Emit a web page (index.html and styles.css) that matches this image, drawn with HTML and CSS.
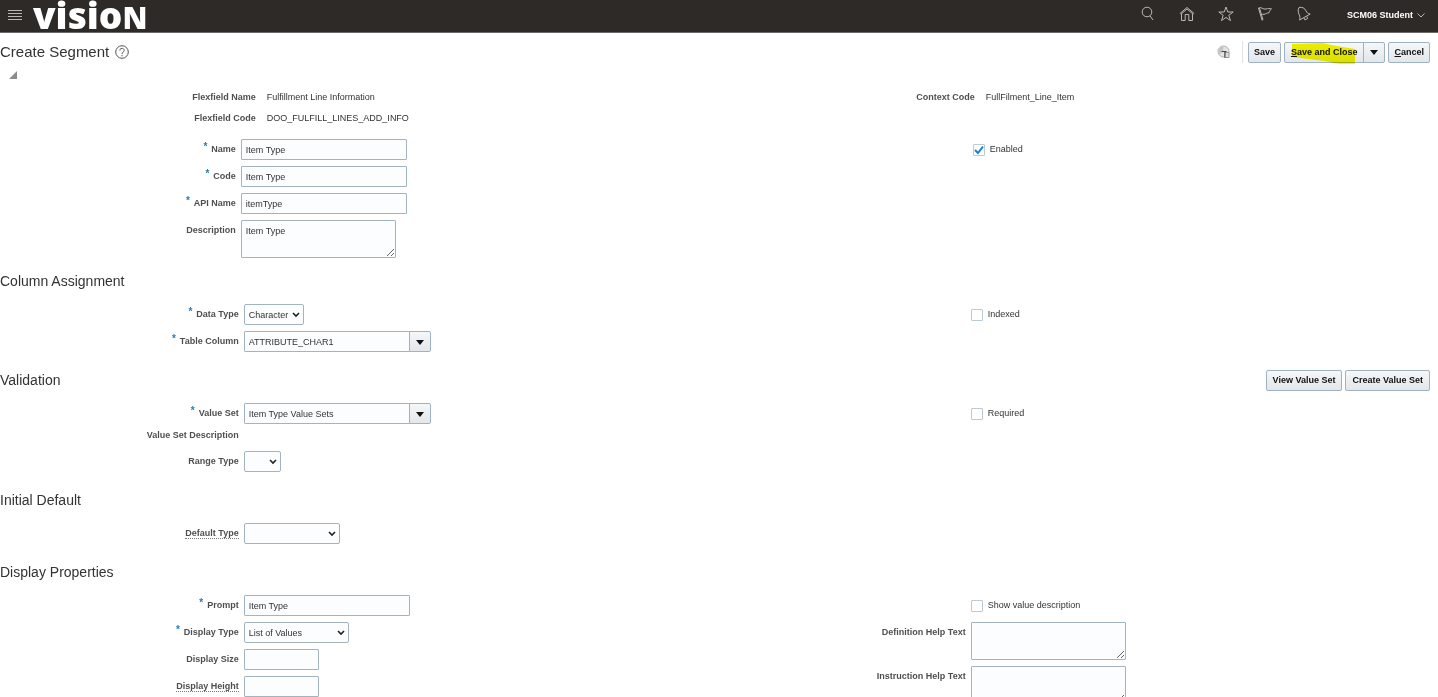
FILE: index.html
```html
<!DOCTYPE html>
<html lang="en">
<head>
<meta charset="utf-8">
<title>Create Segment</title>
<link rel="stylesheet" href="styles.css">
</head>
<body>
<header class="topbar">
  <button class="icon-button menu" aria-label="Menu"><svg width="14" height="11" viewBox="0 0 14 11"><path d="M0 .5h14M0 3.500h14M0 6.500h14M0 9.500h14"/></svg></button>
  <a class="logo" href="#">visio<span class="logo-cap">N</span></a>
  <nav class="tools" aria-label="Global">
    <button class="icon-button" aria-label="Search"><svg width="16" height="16" viewBox="0 0 16 16"><circle cx="7" cy="6" r="4.800"/><path d="M10 9.800l3 4.200"/></svg></button>
    <button class="icon-button" aria-label="Home"><svg width="16" height="16" viewBox="0 0 16 16"><path d="M.8 7.600L8 1.500l7.200 6.100M1.800 8.300L8 3l6.200 5.300M2.500 8v6.500h3.700V8.500h3.600v6h3.700V8"/></svg></button>
    <button class="icon-button" aria-label="Favorites"><svg width="16" height="16" viewBox="0 0 16 16"><path d="M8 1l1.800 5h5.400l-4.400 3.300 1.700 5.300L8 11.400l-4.500 3.200 1.700-5.300L.8 6h5.400z"/></svg></button>
    <button class="icon-button" aria-label="Watchlist"><svg width="16" height="16" viewBox="0 0 16 16"><path d="M1.500 2l3.700 12.500M2.500 2l3.500 12M1.500 2c3-1.500 4.500 1.800 7.500 1 2-.6 3.500-.6 5.500-.1-1.500 1-2 2.200-2.800 4.200-2-.5-2.700 1-4.700 1.200-1.500.1-2.200-.3-3.200.4"/></svg></button>
    <button class="icon-button" aria-label="Notifications"><svg width="16" height="16" viewBox="0 0 16 16"><path d="M3 1.500c3-.8 5.800.6 7 3.300.7 1.800 1.500 2.500 4.200 3.300L3.500 14c.7-2.300.5-3.500-.3-5.300-1.200-2.600-1.400-5-.2-7.200zM8 12l.9 1.900 2.700-1.400-.8-2.100"/></svg></button>
  </nav>
  <button class="user">SCM06 Student<svg width="8" height="5" viewBox="0 0 8 5"><path d="M.5.500L4 4l3.500-3.500"/></svg></button>
</header>

<main class="page">
  <div class="title-row">
    <h1>Create Segment</h1>
    <button class="help" aria-label="Help"><svg width="14" height="14" viewBox="0 0 14 14"><circle cx="7" cy="7" r="6.300"/><path d="M4.800 5.500c0-3 4.500-2.800 4.400 0C9.200 7 7 7 7 9M7 10v1.300"/></svg></button>
    <div class="actions">
      <svg class="status" width="14" height="14" viewBox="0 0 14 14"><circle cx="6.500" cy="6.500" r="5.500" fill="#e4e4e4" stroke="#b0b0b0"/><path d="M6.500 1.500A5 5 0 0 0 2.500 9.500L6 6z" fill="#c6c6c6"/><path d="M7.500 7.500h4.500v5H7.500z" fill="#ddd" stroke="#999"/><path d="M4.500 6.500h5M8 6.500v6" fill="none" stroke="#444"/></svg>
      <span class="divider"></span>
      <button class="button">Save</button>
      <div class="split">
        <button class="button marked"><u>S</u>ave and Close<svg class="marker" width="66" height="22" viewBox="0 0 66 22"><path d="M1 1L31 0l15 3 18 3v15H48l-14-3-33-4z"/></svg></button>
        <button class="button drop" aria-label="More save options"><span class="caret"></span></button>
      </div>
      <button class="button"><u>C</u>ancel</button>
    </div>
  </div>
  <button class="disclosure" aria-label="Collapse"><svg width="8" height="8" viewBox="0 0 8 8"><path d="M8 0v8H0z"/></svg></button>

  <form class="form basic">
    <div class="column">
      <dl class="facts">
        <dt>Flexfield Name</dt><dd>Fulfillment Line Information</dd>
        <dt>Flexfield Code</dt><dd>DOO_FULFILL_LINES_ADD_INFO</dd>
      </dl>
      <div class="row"><label for="name"><i>*</i>Name</label><input class="field wide" id="name" value="Item Type"></div>
      <div class="row"><label for="code"><i>*</i>Code</label><input class="field wide" id="code" value="Item Type"></div>
      <div class="row"><label for="api"><i>*</i>API Name</label><input class="field wide" id="api" value="itemType"></div>
      <div class="row"><label for="desc">Description</label><textarea class="field" id="desc">Item Type</textarea></div>
    </div>
    <div class="column">
      <dl class="facts context"><dt>Context Code</dt><dd>FullFilment_Line_Item</dd></dl>
      <div class="row check"><input type="checkbox" id="enabled" checked><label for="enabled">Enabled</label></div>
    </div>
  </form>

  <div class="section-head first"><h2>Column Assignment</h2></div>
  <form class="form">
    <div class="column">
      <div class="row"><label for="dtype"><i>*</i>Data Type</label><select class="field short" id="dtype"><option>Character</option></select></div>
      <div class="row"><label for="tcol"><i>*</i>Table Column</label><div class="combo"><input class="field wide" id="tcol" value="ATTRIBUTE_CHAR1"><button type="button" class="button drop" aria-label="Search Table Column"><span class="caret"></span></button></div></div>
    </div>
    <div class="column">
      <div class="row check"><input type="checkbox" id="indexed"><label for="indexed">Indexed</label></div>
    </div>
  </form>

  <div class="section-head"><h2>Validation</h2>
    <div class="actions"><button class="button">View Value Set</button><button class="button">Create Value Set</button></div>
  </div>
  <form class="form">
    <div class="column">
      <div class="row"><label for="vset"><i>*</i>Value Set</label><div class="combo"><input class="field wide" id="vset" value="Item Type Value Sets"><button type="button" class="button drop" aria-label="Search Value Set"><span class="caret"></span></button></div></div>
      <div class="row text-only"><span class="label">Value Set Description</span></div>
      <div class="row"><label for="range">Range Type</label><select class="field tiny" id="range"><option></option></select></div>
    </div>
    <div class="column">
      <div class="row check"><input type="checkbox" id="required"><label for="required">Required</label></div>
    </div>
  </form>

  <div class="section-head"><h2>Initial Default</h2></div>
  <form class="form">
    <div class="column">
      <div class="row"><label for="deftype"><span class="hint">Default Type</span></label><select class="field default-type" id="deftype"><option></option></select></div>
    </div>
  </form>

  <div class="section-head"><h2>Display Properties</h2></div>
  <form class="form">
    <div class="column">
      <div class="row"><label for="prompt"><i>*</i>Prompt</label><input class="field wide" id="prompt" value="Item Type"></div>
      <div class="row"><label for="disptype"><i>*</i>Display Type</label><select class="field display-type" id="disptype"><option>List of Values</option></select></div>
      <div class="row"><label for="dsize">Display Size</label><input class="field number" id="dsize"></div>
      <div class="row"><label for="dheight"><span class="hint">Display Height</span></label><input class="field number" id="dheight"></div>
    </div>
    <div class="column">
      <div class="row check"><input type="checkbox" id="showval"><label for="showval">Show value description</label></div>
      <div class="row"><label for="defhelp">Definition Help Text</label><textarea class="field" id="defhelp"></textarea></div>
      <div class="row"><label for="inshelp">Instruction Help Text</label><textarea class="field" id="inshelp"></textarea></div>
    </div>
  </form>
</main>
</body>
</html>
```
FILE: styles.css
```css
* { box-sizing: border-box; }
body {
  margin: 0;
  height: 100vh;
  display: flex;
  flex-direction: column;
  overflow: hidden;
  background: #fff;
  color: #333;
  font: 9px/12px "Liberation Sans", Arial, sans-serif;
}
button, input, select, textarea { font: inherit; color: inherit; margin: 0; }
button { cursor: pointer; }
h1, h2, dl, dd { margin: 0; font-weight: normal; }

.topbar {
  flex: none;
  display: flex;
  align-items: flex-start;
  height: 33px;
  padding: 0 13px 0 8px;
  background: #2e2a27;
  border-bottom: 1px solid #6d6a68;
}
.icon-button, .help, .user, .disclosure {
  display: flex;
  align-items: center;
  padding: 0;
  border: 0;
  background: none;
}
.icon-button svg, .user svg, .help svg { fill: none; stroke: #bab8b6; stroke-width: 1; }
.menu { height: 31px; }
.logo {
  margin-left: 11px;
  color: #fff;
  text-decoration: none;
  white-space: nowrap;
  font: 800 37px/29px "Open Sans", "Noto Sans", sans-serif;
}
.logo-cap { font-size: 30px; }
.tools { display: flex; gap: 23px; height: 28px; margin-left: auto; }
.user {
  height: 30px;
  gap: 4px;
  margin-left: 35px;
  color: #fff;
  font-weight: bold;
}

.page { flex: 1; min-height: 0; overflow: auto; scrollbar-width: none; }
.title-row { display: flex; align-items: center; height: 38px; padding-right: 8px; }
h1 { font-size: 15px; line-height: 20px; }
.help { margin-left: 6px; }
.help svg { stroke: #555; }
.actions { display: flex; align-items: center; gap: 3px; margin-left: auto; }
.status { margin-right: 8px; }
.divider { width: 1px; height: 22px; margin-right: 2px; background: #dfe3e6; }
.button {
  height: 21px;
  padding: 0 6px;
  border: 1px solid #9fb2c1;
  border-radius: 2px;
  background: linear-gradient(#f5f7f8, #e3e7ea);
  color: #111;
  font-weight: bold;
  line-height: 18px;
  white-space: nowrap;
}
.title-row .button { padding: 0 5px; }
.split, .combo { display: flex; }
.title-row .marked { position: relative; padding: 0 6px; border-radius: 2px 0 0 2px; }
.title-row .drop, .drop { width: 22px; padding: 0; margin-left: -1px; border-radius: 0 2px 2px 0; }
.caret {
  display: inline-block;
  border: 4px solid transparent;
  border-top: 5px solid #111;
  border-bottom: 0;
}
.marker {
  position: absolute;
  left: 6px;
  top: 0;
  fill: #f6f600;
  mix-blend-mode: multiply;
  pointer-events: none;
}
.disclosure { margin-left: 9px; }
.disclosure svg { fill: #8a8d90; }

.form {
  --label: 16.6vw;
  display: grid;
  grid-template-columns: 727fr 711fr;
}
.basic { --label: 16.4vw; grid-template-columns: 732fr 706fr; padding-top: 8px; }
.column { display: flex; flex-direction: column; gap: 6px; }
.facts {
  display: grid;
  grid-template-columns: calc(var(--label) + 20px) 1fr;
  column-gap: 11px;
  grid-auto-rows: 21px;
  min-height: 46px;
  line-height: 21px;
}
.context { grid-template-columns: calc(var(--label) + 7px) 1fr; }
.facts dt, .row label, .label { text-align: right; font-weight: bold; color: #4f4f4f; }
.row { display: flex; align-items: flex-start; gap: 5px; }
.row > label, .label { width: var(--label); line-height: 21px; white-space: nowrap; }
.row i {
  margin-right: 4px;
  color: #2a7ab8;
  font: bold 10px/12px "Liberation Sans", Arial, sans-serif;
  vertical-align: 2px;
}
.text-only { margin: -5px 0 -1px; }
.hint { border-bottom: 1px dotted #777; }
.field {
  height: 21px;
  padding: 0 4px;
  border: 1px solid #a3b4bf;
  border-radius: 1px;
  background: #fcfdfe;
}
select.field {
  appearance: none;
  border-radius: 2px;
  background: #fcfdfe url('data:image/svg+xml,<svg xmlns="http://www.w3.org/2000/svg" width="8" height="6"><path d="M1 1l3 3 3-3" fill="none" stroke="%23222" stroke-width="1.6"/></svg>') no-repeat right 3px center;
}
textarea.field { width: 155px; height: 38px; padding: 4px; resize: both; }
.wide { width: 166px; }
.short { width: 60px; }
.tiny { width: 37px; }
.default-type { width: 96px; }
.display-type { width: 105px; }
.number { width: 75px; }
.row.check { align-items: center; height: 21px; padding-left: calc(var(--label) + 5px); }
.row.check label { width: auto; font-weight: normal; color: #333; }
input[type="checkbox"] {
  appearance: none;
  width: 12px;
  height: 12px;
  border: 1px solid #bccad3;
  border-radius: 1px;
  background: #fff;
}
input[type="checkbox"]:checked {
  background: #fff url('data:image/svg+xml,<svg xmlns="http://www.w3.org/2000/svg" width="10" height="10"><path d="M1 5l3 3 5-6.500" fill="none" stroke="%231b7fd0" stroke-width="2"/></svg>') no-repeat center;
}

.section-head { display: flex; align-items: center; height: 22px; margin: 17px 0 12px; padding-right: 8px; }
.section-head.first { margin-top: 12px; }
h2 { font-size: 14px; line-height: 18px; }
```
